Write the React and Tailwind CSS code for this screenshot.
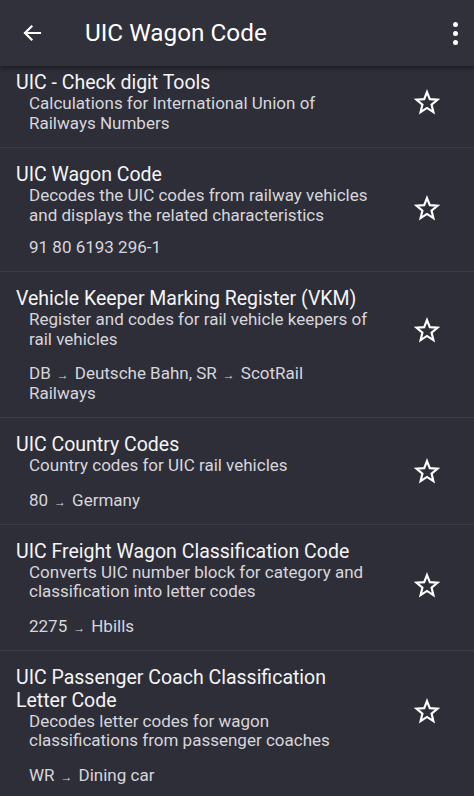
import React from "react";

const items = [
  { title: "UIC - Check digit Tools", desc: "Calculations for International Union of Railways Numbers", star: "ml-[6px]" },
  { title: "UIC Wagon Code", desc: "Decodes the UIC codes from railway vehicles and displays the related characteristics", code: ["91 80 6193 296-1"], star: "ml-[6px] mb-[4px]" },
  { title: "Vehicle Keeper Marking Register (VKM)", desc: "Register and codes for rail vehicle keepers of rail vehicles", code: ["DB", "Deutsche Bahn, SR", "ScotRail Railways"], star: "ml-[6px] mb-[30px]" },
  { title: "UIC Country Codes", desc: "Country codes for UIC rail vehicles", code: ["80", "Germany"], star: "ml-[6px]" },
  { title: "UIC Freight Wagon Classification Code", desc: "Converts UIC number block for category and classification into letter codes", code: ["2275", "Hbills"], star: "ml-[6px] mb-[6px]" },
  { title: "UIC Passenger Coach Classification Letter Code", desc: "Decodes letter codes for wagon classifications from passenger coaches", code: ["WR", "Dining car"], star: "ml-[6px] mb-[28px]" },
];

function Star() {
  return (
    <svg width="26" height="26" viewBox="0 0 24 24" fill="none" stroke="#ffffff" strokeWidth="2" strokeLinejoin="miter">
      <path d="M12 2.8l2.6 6.6 7 .5-5.4 4.5 1.7 6.9L12 17.5l-5.9 3.8 1.7-6.9L2.4 9.9l7-.5z" />
    </svg>
  );
}

function Code({ parts }) {
  const out = [];
  parts.forEach((p, i) => {
    if (i > 0) out.push(<span key={"a" + i} className="inline-block align-baseline text-[12px] leading-[12px] mx-[6px]">→</span>);
    out.push(<span key={i}>{p}</span>);
  });
  const mt = parts.length > 1 ? "mt-[14px]" : "mt-[12px]";
  return <div className={mt + " pr-[14px] text-[17px] leading-[20px] text-[#d6d6dc]"}>{out}</div>;
}

export default function App() {
  return (
    <div className="w-[474px] h-[796px] overflow-hidden bg-[#2e2e38] flex flex-col" style={{ fontFamily: "Roboto, 'Noto Sans', sans-serif" }}>
      <div className="relative z-10 h-[66px] shrink-0 bg-[#31313b] flex items-center shadow-[0_2px_5px_rgba(0,0,0,0.45)]">
        <div className="w-[62px] flex justify-center pl-[2px]">
          <svg width="24" height="24" viewBox="0 0 24 24" fill="none" stroke="#fff" strokeWidth="2.2" strokeLinecap="square">
            <path d="M20 12H5M11.5 5.5L5 12l6.5 6.5" />
          </svg>
        </div>
        <div className="ml-[23px] text-[24.3px] text-white leading-none">UIC Wagon Code</div>
        <div className="ml-auto mr-[16px] flex flex-col gap-[4px] items-center">
          <div className="w-[5px] h-[5px] rounded-full bg-white" />
          <div className="w-[5px] h-[5px] rounded-full bg-white" />
          <div className="w-[5px] h-[5px] rounded-full bg-white" />
        </div>
      </div>
      <div className="-mt-[10px] flex flex-col">
        {items.map((it, i) => (
          <div key={i} className={"flex items-center pl-[16px] pt-[15px] pb-[14px] " + (i < items.length - 1 ? "border-b border-[#3b3b45]" : "")}>
            <div className="w-[358px]">
              <div className="text-[19.5px] leading-[23px] text-[#f4f4f6]">{it.title}</div>
              <div className="pl-[13px]">
                <div className="text-[17px] leading-[19.5px] text-[#d6d6dc]">{it.desc}</div>
                {it.code && <Code parts={it.code} />}
              </div>
            </div>
            <div className="flex-1 flex justify-center">
              <div className={it.star}><Star /></div>
            </div>
          </div>
        ))}
      </div>
    </div>
  );
}
